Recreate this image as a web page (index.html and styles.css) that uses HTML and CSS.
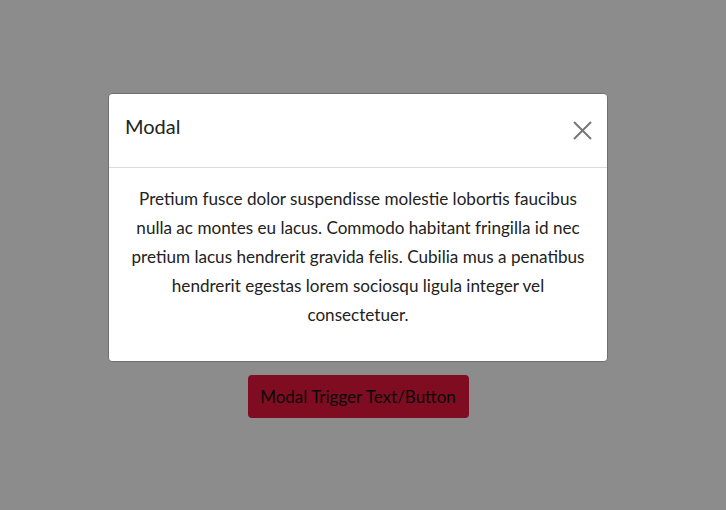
FILE: index.html
```html
<!DOCTYPE html>
<html lang="en">
<head>
    <meta charset="UTF-8">
    <meta name="viewport" content="width=device-width, initial-scale=1.0">
    <title>Modal</title>
    <link rel="stylesheet" href="styles.css">
</head>
<body>
    <!-- Halaman dengan modal terbuka di atas tombol pemicu -->
    <div class="page">
        <div class="modal">
            <div class="modal-header">
                <h2 class="modal-title">Modal</h2>
                <button class="modal-close" aria-label="Close">
                    <svg width="19" height="19" viewBox="0 0 19 19">
                        <path d="M1 1 L18 18 M18 1 L1 18" stroke="#777" stroke-width="2" fill="none"/>
                    </svg>
                </button>
            </div>
            <div class="modal-body">
                <p>Pretium fusce dolor suspendisse molestie lobortis faucibus nulla ac montes eu lacus. Commodo habitant fringilla id nec pretium lacus hendrerit gravida felis. Cubilia mus a penatibus hendrerit egestas lorem sociosqu ligula integer vel consectetuer.</p>
            </div>
        </div>
        <button class="trigger">Modal Trigger Text/Button</button>
    </div>
</body>
</html>
```

FILE: styles.css
```css
* {
    margin: 0;
    padding: 0;
    box-sizing: border-box;
}

body {
    background-color: #8c8c8c;
    font-family: "Lato", "Open Sans", sans-serif;
    color: #222;
}

/* kolom tengah: modal lalu tombol */
.page {
    width: 716px;
    height: 510px;
    display: flex;
    flex-direction: column;
    align-items: center;
    justify-content: center;
    gap: 13px;
}

.modal {
    width: 500px;
    background-color: #fff;
    border: 1px solid #6f6f6f;
    border-radius: 4px;
}

.modal-header {
    display: flex;
    justify-content: space-between;
    align-items: center;
    height: 74px;
    padding: 0 15px 0 16px;
    border-bottom: 1px solid #dcdcdc;
}

.modal-title {
    font-size: 20px;
    font-weight: 400;
    color: #222;
    margin-top: -8px;
}

.modal-close {
    background: none;
    border: none;
    width: 20px;
    height: 20px;
    display: flex;
    align-items: center;
    justify-content: center;
    cursor: pointer;
}

.modal-body {
    padding: 16px 15px;
    text-align: center;
}

.modal-body p {
    font-size: 17.1px;
    line-height: 29px;
    margin-bottom: 16px;
}

.trigger {
    font-family: "Lato", "Open Sans", sans-serif;
    font-size: 17px;
    background-color: #7f0c21;
    color: #0a0a0a;
    border: none;
    border-radius: 4px;
    width: 221px;
    height: 43px;
}
```
